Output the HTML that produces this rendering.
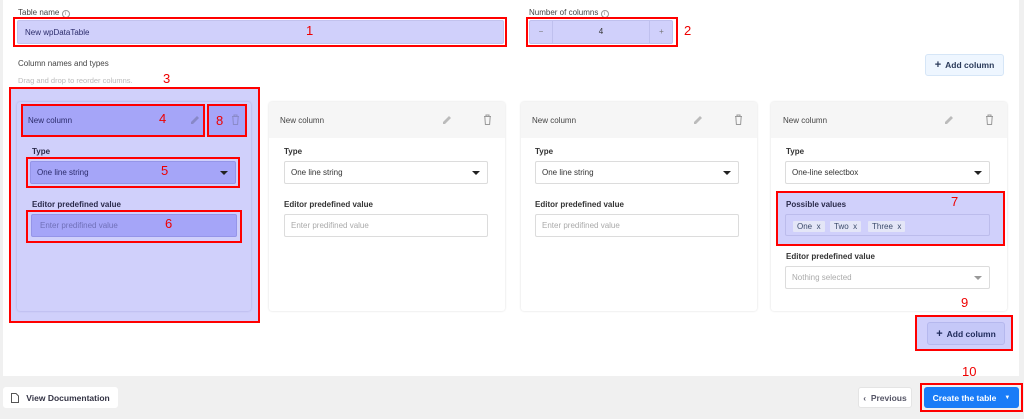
<!DOCTYPE html>
<html><head><meta charset="utf-8"><style>
*{box-sizing:border-box;margin:0;padding:0}
body{width:1024px;height:419px;background:#f0f0f0;font-family:"Liberation Sans",sans-serif;position:relative;overflow:hidden;color:#333}
.a{position:absolute}
.panel{left:3px;top:0;width:1016px;height:376px;background:#fff}
.lbl{font-size:8px;color:#444}
.blbl{font-size:8px;font-weight:bold;color:#333}
.inp{border:1px solid #dcdcdc;border-radius:2px;background:#fff;font-size:8px;display:flex;align-items:center;padding-left:6px;color:#333}
.ph{color:#aaa}
.red{border:2px solid #f00;position:absolute}
.num{position:absolute;color:#e00;font-size:13px}
.card{background:#fff;border-radius:3px;box-shadow:0 0 2px rgba(0,0,0,.15)}
.hdr{background:#f6f6f6;height:36px;border-radius:3px 3px 0 0}
.caret{position:absolute;right:7px;top:9px;width:0;height:0;border-left:4px solid transparent;border-right:4px solid transparent;border-top:4px solid #222}
.tag{position:absolute;top:6px;height:11px;background:#e4e6f7;font-size:8px;color:#3a4a6a;padding:1px 4px;border-radius:1px}
.btn{position:absolute;font-size:8.5px;display:flex;align-items:center;justify-content:center;border-radius:3px}
</style></head><body>
<div class="a panel"></div>

<div class="a lbl" style="left:18px;top:8px">Table name <span style="display:inline-block;width:8px;height:8px;border:1px solid #999;border-radius:50%;font-size:6px;text-align:center;line-height:7px;color:#999">i</span></div>
<div class="a inp" style="left:17px;top:20px;width:487px;height:24px;background:#d0d0fb;border-color:#c2c2ee;color:#2a2a6a;padding-left:7px">New wpDataTable</div>
<div class="red" style="left:13px;top:17px;width:494px;height:30px"></div>
<div class="num" style="left:306px;top:23px">1</div>

<div class="a lbl" style="left:529px;top:8px">Number of columns <span style="display:inline-block;width:8px;height:8px;border:1px solid #999;border-radius:50%;font-size:6px;text-align:center;line-height:7px;color:#999">i</span></div>
<div class="a" style="left:529px;top:20px;width:144px;height:24px;background:#d0d0fb;border:1px solid #bfc0ee;border-radius:2px;font-size:8px;color:#333">
 <div class="a" style="left:0;top:0;width:23px;height:22px;border-right:1px solid #bfc0ee;text-align:center;line-height:22px;color:#777">−</div>
 <div class="a" style="left:23px;top:0;width:96px;height:22px;text-align:center;line-height:22px">4</div>
 <div class="a" style="left:119px;top:0;width:24px;height:22px;border-left:1px solid #bfc0ee;text-align:center;line-height:22px;color:#777">+</div>
</div>
<div class="red" style="left:526px;top:17px;width:152px;height:30px"></div>
<div class="num" style="left:684px;top:23px">2</div>

<div class="a lbl" style="left:18px;top:59px">Column names and types</div>
<div class="a" style="left:18px;top:76px;font-size:7.5px;color:#bbb">Drag and drop to reorder columns.</div>
<div class="num" style="left:163px;top:71px">3</div>
<div class="btn" style="left:925px;top:54px;width:79px;height:22px;background:#eef6ff;border:1px solid #d6e6f7;color:#2a3a5a;font-weight:bold"><span style="font-size:11px;margin-right:4px">+</span>Add column</div>

<!-- card 1 highlighted -->
<div class="a" style="left:9px;top:87px;width:251px;height:236px;background:#d0d0fb"></div>
<div class="a card" style="left:17px;top:102px;width:234px;height:209px;background:#d0d0fb;box-shadow:0 0 2px rgba(80,80,160,.3)"></div>
<div class="a" style="left:21px;top:104px;width:184px;height:33px;background:#a5a5f8"></div>
<div class="a" style="left:28px;top:116px;font-size:8px;color:#2a2a6a">New column</div>
<div class="a" style="left:207px;top:104px;width:40px;height:33px;background:#a5a5f8"></div>
<div class="red" style="left:21px;top:104px;width:184px;height:33px"></div>
<div class="red" style="left:207px;top:104px;width:40px;height:33px"></div>
<div class="num" style="left:159px;top:111px">4</div>
<div class="num" style="left:216px;top:113px">8</div>
<svg class="a" style="left:190px;top:115px" width="10" height="10" viewBox="0 0 10 10"><path d="M1 9 L1 7 L7 1 L9 3 L3 9 Z" fill="#8888c8"/></svg>
<svg class="a" style="left:231px;top:114px" width="9" height="11" viewBox="0 0 9 11"><path d="M1 2.5h7M3 2.5V1h3v1.5M1.8 2.5l.6 8h4.2l.6-8" fill="none" stroke="#8a8ac8" stroke-width="1"/></svg>
<div class="a blbl" style="left:32px;top:147px;color:#2a2a4a">Type</div>
<div class="a inp" style="left:30px;top:161px;width:206px;height:23px;background:#a5a5f8;border-color:#9595e8;color:#2a2a6a">One line string<div class="caret" style="top:9px"></div></div>
<div class="red" style="left:26px;top:157px;width:214px;height:31px"></div>
<div class="num" style="left:161px;top:163px">5</div>
<div class="a blbl" style="left:32px;top:200px;color:#2a2a4a">Editor predefined value</div>
<div class="a inp" style="left:31px;top:214px;width:206px;height:23px;background:#a5a5f8;border-color:#9595e8;color:#7070b8;padding-left:8px">Enter predifined value</div>
<div class="red" style="left:26px;top:210px;width:216px;height:33px"></div>
<div class="num" style="left:165px;top:216px">6</div>
<div class="red" style="left:9px;top:87px;width:251px;height:236px"></div>

<!-- cards 2,3 -->
<div class="a card" style="left:269px;top:102px;width:236px;height:209px"><div class="hdr"></div></div>
<div class="a" style="left:280px;top:116px;font-size:8px;color:#444">New column</div>
<svg class="a" style="left:442px;top:115px" width="10" height="10" viewBox="0 0 10 10"><path d="M1 9 L1 7 L7 1 L9 3 L3 9 Z" fill="#bbb"/></svg>
<svg class="a" style="left:483px;top:114px" width="9" height="11" viewBox="0 0 9 11"><path d="M1 2.5h7M3 2.5V1h3v1.5M1.8 2.5l.6 8h4.2l.6-8" fill="none" stroke="#999" stroke-width="1"/></svg>
<div class="a blbl" style="left:284px;top:147px">Type</div>
<div class="a inp" style="left:284px;top:161px;width:204px;height:23px">One line string<div class="caret"></div></div>
<div class="a blbl" style="left:284px;top:200px">Editor predefined value</div>
<div class="a inp ph" style="left:284px;top:214px;width:204px;height:23px;color:#aaa">Enter predifined value</div>

<div class="a card" style="left:521px;top:102px;width:236px;height:209px"><div class="hdr"></div></div>
<div class="a" style="left:532px;top:116px;font-size:8px;color:#444">New column</div>
<svg class="a" style="left:693px;top:115px" width="10" height="10" viewBox="0 0 10 10"><path d="M1 9 L1 7 L7 1 L9 3 L3 9 Z" fill="#bbb"/></svg>
<svg class="a" style="left:734px;top:114px" width="9" height="11" viewBox="0 0 9 11"><path d="M1 2.5h7M3 2.5V1h3v1.5M1.8 2.5l.6 8h4.2l.6-8" fill="none" stroke="#999" stroke-width="1"/></svg>
<div class="a blbl" style="left:535px;top:147px">Type</div>
<div class="a inp" style="left:535px;top:161px;width:204px;height:23px">One line string<div class="caret"></div></div>
<div class="a blbl" style="left:535px;top:200px">Editor predefined value</div>
<div class="a inp" style="left:535px;top:214px;width:204px;height:23px;color:#aaa">Enter predifined value</div>

<!-- card 4 -->
<div class="a card" style="left:771px;top:102px;width:236px;height:209px"><div class="hdr"></div></div>
<div class="a" style="left:783px;top:116px;font-size:8px;color:#444">New column</div>
<svg class="a" style="left:944px;top:115px" width="10" height="10" viewBox="0 0 10 10"><path d="M1 9 L1 7 L7 1 L9 3 L3 9 Z" fill="#bbb"/></svg>
<svg class="a" style="left:985px;top:114px" width="9" height="11" viewBox="0 0 9 11"><path d="M1 2.5h7M3 2.5V1h3v1.5M1.8 2.5l.6 8h4.2l.6-8" fill="none" stroke="#999" stroke-width="1"/></svg>
<div class="a blbl" style="left:786px;top:147px">Type</div>
<div class="a inp" style="left:785px;top:161px;width:205px;height:23px">One-line selectbox<div class="caret"></div></div>
<div class="a" style="left:777px;top:191px;width:228px;height:54px;background:#d0d0fb"></div>
<div class="a blbl" style="left:786px;top:200px;color:#2a2a4a">Possible values</div>
<div class="a" style="left:785px;top:214px;width:205px;height:22px;border:1px solid #bcbcec;border-radius:2px">
 <div class="tag" style="left:7px">One &nbsp;x</div>
 <div class="tag" style="left:44px">Two &nbsp;x</div>
 <div class="tag" style="left:82px">Three &nbsp;x</div>
</div>
<div class="red" style="left:776px;top:191px;width:229px;height:55px"></div>
<div class="num" style="left:951px;top:194px">7</div>
<div class="a blbl" style="left:786px;top:252px">Editor predefined value</div>
<div class="a inp" style="left:785px;top:266px;width:205px;height:23px;color:#aaa">Nothing selected<div class="caret" style="border-top-color:#999"></div></div>

<div class="num" style="left:961px;top:295px">9</div>
<div class="a" style="left:917px;top:316px;width:94px;height:33px;background:#d0d0fb"></div>
<div class="btn" style="left:927px;top:322px;width:78px;height:23px;background:#c5c8f8;border:1px solid #b5b8ee;color:#1f2a5a;font-weight:bold"><span style="font-size:11px;margin-right:4px">+</span>Add column</div>
<div class="red" style="left:915px;top:315px;width:98px;height:36px"></div>

<!-- footer -->
<div class="btn" style="left:3px;top:387px;width:115px;height:21px;background:#fff;color:#334;font-weight:bold">
<svg width="8" height="10" viewBox="0 0 8 10" style="margin-right:7px"><path d="M.5.5h4.5l2.5 2.5v6.5h-7z" fill="none" stroke="#555" stroke-width="1"/></svg>View Documentation</div>
<div class="btn" style="left:858px;top:387px;width:54px;height:21px;background:#fff;color:#556;font-weight:bold;border:1px solid #e4e4e4">‹&nbsp; Previous</div>
<div class="num" style="left:962px;top:364px">10</div>
<div class="btn" style="left:924px;top:387px;width:95px;height:21px;background:#1a7cf7;color:#fff;font-weight:bold">Create the table <span style="margin-left:8px;font-size:6px">▼</span></div>
<div class="red" style="left:920px;top:383px;width:103px;height:29px"></div>
</body></html>
